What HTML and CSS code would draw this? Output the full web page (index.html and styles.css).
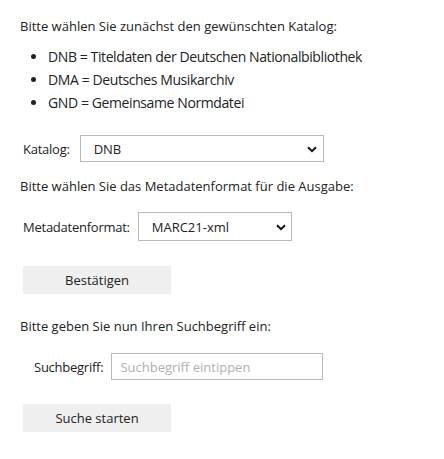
FILE: index.html
```html
<!DOCTYPE html>
<html lang="de">
<head>
<meta charset="utf-8">
<title>Katalogsuche</title>
<link rel="stylesheet" href="styles.css">
</head>
<body>
<p class="text intro">Bitte wählen Sie zunächst den gewünschten Katalog:</p>
<ul class="catalogs">
  <li>DNB = Titeldaten der Deutschen Nationalbibliothek</li>
  <li>DMA = Deutsches Musikarchiv</li>
  <li>GND = Gemeinsame Normdatei</li>
</ul>
<div class="row row-katalog">
  <label class="label" for="katalog">Katalog:</label>
  <div class="select-wrap select-katalog">
    <select id="katalog" class="select">
      <option>DNB</option>
      <option>DMA</option>
      <option>GND</option>
    </select>
    <svg class="chevron" width="10" height="7" viewBox="0 0 10 7"><path d="M1 1.2 L5 5.2 L9 1.2" fill="none" stroke="#111" stroke-width="2"/></svg>
  </div>
</div>
<p class="text format-text">Bitte wählen Sie das Metadatenformat für die Ausgabe:</p>
<div class="row row-format">
  <label class="label" for="format">Metadatenformat:</label>
  <div class="select-wrap select-format">
    <select id="format" class="select">
      <option>MARC21-xml</option>
    </select>
    <svg class="chevron" width="10" height="7" viewBox="0 0 10 7"><path d="M1 1.2 L5 5.2 L9 1.2" fill="none" stroke="#111" stroke-width="2"/></svg>
  </div>
</div>
<button class="btn btn-confirm" type="button">Bestätigen</button>
<p class="text search-text">Bitte geben Sie nun Ihren Suchbegriff ein:</p>
<div class="row row-search">
  <label class="label" for="term">Suchbegriff:</label>
  <input id="term" class="input" type="text" placeholder="Suchbegriff eintippen">
</div>
<button class="btn btn-search" type="button">Suche starten</button>
</body>
</html>
```
FILE: styles.css
```css
html, body {
  background: #fff;
}
body {
  margin: 0;
  padding: 0 20px;
  font-family: "Open Sans", "Noto Sans", sans-serif;
  font-size: 13px;
  color: #222;
}
.text {
  margin: 0;
  line-height: 18px;
}
.intro {
  padding-top: 17px;
}
.catalogs {
  margin: 10px 0 0;
  padding-left: 28px;
  font-size: 14px;
  letter-spacing: -0.4px;
  line-height: 23px;
}
.row {
  display: flex;
  align-items: center;
  gap: 8px;
  padding-left: 3px;
}
.label {
  line-height: 18px;
  letter-spacing: -0.25px;
}
.row-katalog {
  margin-top: 21px;
  gap: 10px;
}
.format-text {
  margin-top: 15px;
}
.row-format {
  margin-top: 17px;
}
.search-text {
  margin-top: 23px;
}
.row-search {
  margin-top: 18px;
  padding-left: 14px;
}
.select-wrap {
  position: relative;
}
.select {
  appearance: none;
  -webkit-appearance: none;
  display: block;
  box-sizing: border-box;
  margin: 0;
  border: 1px solid #b8b8b8;
  border-radius: 0;
  background: #fff;
  font-family: inherit;
  font-size: 13px;
  color: #222;
  outline: none;
}
.select-katalog .select {
  width: 244px;
  height: 27px;
  padding: 0 0 0 13px;
}
.select-format .select {
  width: 154px;
  height: 29px;
  padding: 0 0 0 13px;
}
.chevron {
  position: absolute;
  top: 50%;
  margin-top: -3px;
  right: 7px;
  pointer-events: none;
}
.select-format .chevron {
  right: 6px;
}
.btn {
  display: block;
  box-sizing: border-box;
  margin: 24px 0 0 3px;
  width: 148px;
  height: 28px;
  padding: 0;
  border: none;
  border-radius: 0;
  background: #efefef;
  font-family: inherit;
  font-size: 13px;
  color: #222;
}
.btn-confirm {
  margin-top: 25px;
}
.input {
  box-sizing: border-box;
  width: 212px;
  height: 27px;
  margin: 0;
  padding: 0 8px;
  border: 1px solid #b8b8b8;
  border-radius: 0;
  font-family: inherit;
  font-size: 13px;
  color: #222;
  outline: none;
}
.input::placeholder {
  color: #b0b0b0;
}
```
